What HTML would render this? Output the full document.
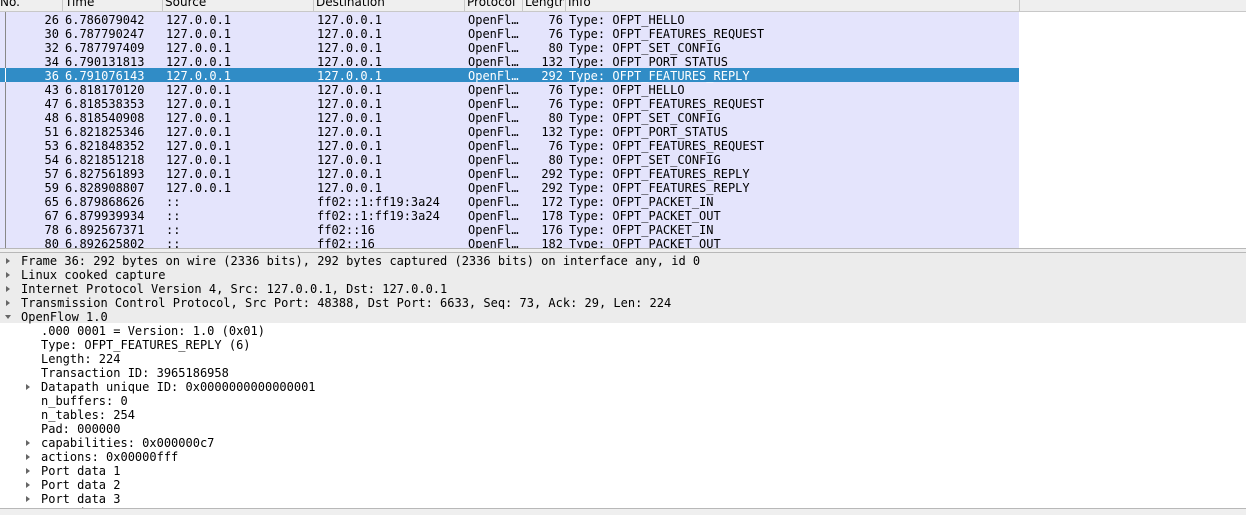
<!DOCTYPE html>
<html><head><style>
*{margin:0;padding:0;box-sizing:border-box}
body{width:1246px;height:515px;overflow:hidden;background:#fff;font-family:"DejaVu Sans Mono","Liberation Mono",monospace;font-size:12px;color:#000;position:relative}
.hdr{position:absolute;left:0;top:0;width:1246px;height:12px;background:#efefef;border-bottom:1px solid #c8c8c8;font-family:"DejaVu Sans","Liberation Sans",sans-serif;font-size:12px;line-height:11px;overflow:hidden}
.hdr span{position:absolute;top:-3px;white-space:nowrap;overflow:hidden}
.hdr i{position:absolute;top:0;width:1px;height:12px;background:#c8c8c8}
.list{position:absolute;left:0;top:12px;width:1019px;height:236px;background:#e4e4fc;overflow:hidden}
.row{position:absolute;left:0;width:1019px;height:14px;line-height:14px;white-space:pre}
.row span{position:absolute;top:1px}
.sel{background:#308cc6;color:#fff}
.vl{position:absolute;left:5px;width:1px;background:#888}
.split{position:absolute;left:0;top:248px;width:1246px;height:5px;background:#efefef;border-top:1px solid #b8b8b8;border-bottom:1px solid #b8b8b8}
.det{position:absolute;left:0;top:253px;width:1246px;height:255px;overflow:hidden}
.d{position:absolute;left:0;width:1246px;height:14px;line-height:14px;white-space:pre}
.g{background:#ececec}
.d span{position:absolute;top:1px}
.tri{position:absolute;top:5px;width:0;height:0;border-top:3px solid transparent;border-bottom:3px solid transparent;border-left:4px solid #666}
.tdn{position:absolute;top:6px;width:0;height:0;border-left:3px solid transparent;border-right:3px solid transparent;border-top:4px solid #666}
.bot{position:absolute;left:0;top:508px;width:1246px;height:7px;background:#efefef;border-top:1px solid #b8b8b8}
</style></head><body>
<div class="hdr">
<span style="left:0">No.</span><i style="left:62px"></i>
<span style="left:65px">Time</span><i style="left:162px"></i>
<span style="left:165px">Source</span><i style="left:313px"></i>
<span style="left:316px">Destination</span><i style="left:464px"></i>
<span style="left:467px">Protocol</span><i style="left:522px"></i>
<span style="left:525px;width:39px">Length</span><i style="left:565px"></i>
<span style="left:568px">Info</span><i style="left:1019px"></i>
</div>
<div class="list">
<div class="vl" style="top:0;height:236px"></div>
<div class="row" style="top:0"><span style="right:960px">26</span><span style="left:65px">6.786079042</span><span style="left:166px">127.0.0.1</span><span style="left:317px">127.0.0.1</span><span style="left:468px">OpenFl…</span><span style="right:456px">76</span><span style="left:569px">Type: OFPT_HELLO</span></div>
<div class="row" style="top:14px"><span style="right:960px">30</span><span style="left:65px">6.787790247</span><span style="left:166px">127.0.0.1</span><span style="left:317px">127.0.0.1</span><span style="left:468px">OpenFl…</span><span style="right:456px">76</span><span style="left:569px">Type: OFPT_FEATURES_REQUEST</span></div>
<div class="row" style="top:28px"><span style="right:960px">32</span><span style="left:65px">6.787797409</span><span style="left:166px">127.0.0.1</span><span style="left:317px">127.0.0.1</span><span style="left:468px">OpenFl…</span><span style="right:456px">80</span><span style="left:569px">Type: OFPT_SET_CONFIG</span></div>
<div class="row" style="top:42px"><span style="right:960px">34</span><span style="left:65px">6.790131813</span><span style="left:166px">127.0.0.1</span><span style="left:317px">127.0.0.1</span><span style="left:468px">OpenFl…</span><span style="right:456px">132</span><span style="left:569px">Type: OFPT_PORT_STATUS</span></div>
<div class="row sel" style="top:56px"><span style="left:5px;top:0;width:1px;height:14px;background:#fff"></span><span style="right:960px">36</span><span style="left:65px">6.791076143</span><span style="left:166px">127.0.0.1</span><span style="left:317px">127.0.0.1</span><span style="left:468px">OpenFl…</span><span style="right:456px">292</span><span style="left:569px">Type: OFPT_FEATURES_REPLY</span></div>
<div class="row" style="top:70px"><span style="right:960px">43</span><span style="left:65px">6.818170120</span><span style="left:166px">127.0.0.1</span><span style="left:317px">127.0.0.1</span><span style="left:468px">OpenFl…</span><span style="right:456px">76</span><span style="left:569px">Type: OFPT_HELLO</span></div>
<div class="row" style="top:84px"><span style="right:960px">47</span><span style="left:65px">6.818538353</span><span style="left:166px">127.0.0.1</span><span style="left:317px">127.0.0.1</span><span style="left:468px">OpenFl…</span><span style="right:456px">76</span><span style="left:569px">Type: OFPT_FEATURES_REQUEST</span></div>
<div class="row" style="top:98px"><span style="right:960px">48</span><span style="left:65px">6.818540908</span><span style="left:166px">127.0.0.1</span><span style="left:317px">127.0.0.1</span><span style="left:468px">OpenFl…</span><span style="right:456px">80</span><span style="left:569px">Type: OFPT_SET_CONFIG</span></div>
<div class="row" style="top:112px"><span style="right:960px">51</span><span style="left:65px">6.821825346</span><span style="left:166px">127.0.0.1</span><span style="left:317px">127.0.0.1</span><span style="left:468px">OpenFl…</span><span style="right:456px">132</span><span style="left:569px">Type: OFPT_PORT_STATUS</span></div>
<div class="row" style="top:126px"><span style="right:960px">53</span><span style="left:65px">6.821848352</span><span style="left:166px">127.0.0.1</span><span style="left:317px">127.0.0.1</span><span style="left:468px">OpenFl…</span><span style="right:456px">76</span><span style="left:569px">Type: OFPT_FEATURES_REQUEST</span></div>
<div class="row" style="top:140px"><span style="right:960px">54</span><span style="left:65px">6.821851218</span><span style="left:166px">127.0.0.1</span><span style="left:317px">127.0.0.1</span><span style="left:468px">OpenFl…</span><span style="right:456px">80</span><span style="left:569px">Type: OFPT_SET_CONFIG</span></div>
<div class="row" style="top:154px"><span style="right:960px">57</span><span style="left:65px">6.827561893</span><span style="left:166px">127.0.0.1</span><span style="left:317px">127.0.0.1</span><span style="left:468px">OpenFl…</span><span style="right:456px">292</span><span style="left:569px">Type: OFPT_FEATURES_REPLY</span></div>
<div class="row" style="top:168px"><span style="right:960px">59</span><span style="left:65px">6.828908807</span><span style="left:166px">127.0.0.1</span><span style="left:317px">127.0.0.1</span><span style="left:468px">OpenFl…</span><span style="right:456px">292</span><span style="left:569px">Type: OFPT_FEATURES_REPLY</span></div>
<div class="row" style="top:182px"><span style="right:960px">65</span><span style="left:65px">6.879868626</span><span style="left:166px">::</span><span style="left:317px">ff02::1:ff19:3a24</span><span style="left:468px">OpenFl…</span><span style="right:456px">172</span><span style="left:569px">Type: OFPT_PACKET_IN</span></div>
<div class="row" style="top:196px"><span style="right:960px">67</span><span style="left:65px">6.879939934</span><span style="left:166px">::</span><span style="left:317px">ff02::1:ff19:3a24</span><span style="left:468px">OpenFl…</span><span style="right:456px">178</span><span style="left:569px">Type: OFPT_PACKET_OUT</span></div>
<div class="row" style="top:210px"><span style="right:960px">78</span><span style="left:65px">6.892567371</span><span style="left:166px">::</span><span style="left:317px">ff02::16</span><span style="left:468px">OpenFl…</span><span style="right:456px">176</span><span style="left:569px">Type: OFPT_PACKET_IN</span></div>
<div class="row" style="top:224px"><span style="right:960px">80</span><span style="left:65px">6.892625802</span><span style="left:166px">::</span><span style="left:317px">ff02::16</span><span style="left:468px">OpenFl…</span><span style="right:456px">182</span><span style="left:569px">Type: OFPT_PACKET_OUT</span></div>
</div>
<div class="split"></div>
<div class="det">
<div class="d g" style="top:0"><b class="tri" style="left:6px"></b><span style="left:21px">Frame 36: 292 bytes on wire (2336 bits), 292 bytes captured (2336 bits) on interface any, id 0</span></div>
<div class="d g" style="top:14px"><b class="tri" style="left:6px"></b><span style="left:21px">Linux cooked capture</span></div>
<div class="d g" style="top:28px"><b class="tri" style="left:6px"></b><span style="left:21px">Internet Protocol Version 4, Src: 127.0.0.1, Dst: 127.0.0.1</span></div>
<div class="d g" style="top:42px"><b class="tri" style="left:6px"></b><span style="left:21px">Transmission Control Protocol, Src Port: 48388, Dst Port: 6633, Seq: 73, Ack: 29, Len: 224</span></div>
<div class="d g" style="top:56px"><b class="tdn" style="left:5px"></b><span style="left:21px">OpenFlow 1.0</span></div>
<div class="d" style="top:70px"><span style="left:41px">.000 0001 = Version: 1.0 (0x01)</span></div>
<div class="d" style="top:84px"><span style="left:41px">Type: OFPT_FEATURES_REPLY (6)</span></div>
<div class="d" style="top:98px"><span style="left:41px">Length: 224</span></div>
<div class="d" style="top:112px"><span style="left:41px">Transaction ID: 3965186958</span></div>
<div class="d" style="top:126px"><b class="tri" style="left:26px"></b><span style="left:41px">Datapath unique ID: 0x0000000000000001</span></div>
<div class="d" style="top:140px"><span style="left:41px">n_buffers: 0</span></div>
<div class="d" style="top:154px"><span style="left:41px">n_tables: 254</span></div>
<div class="d" style="top:168px"><span style="left:41px">Pad: 000000</span></div>
<div class="d" style="top:182px"><b class="tri" style="left:26px"></b><span style="left:41px">capabilities: 0x000000c7</span></div>
<div class="d" style="top:196px"><b class="tri" style="left:26px"></b><span style="left:41px">actions: 0x00000fff</span></div>
<div class="d" style="top:210px"><b class="tri" style="left:26px"></b><span style="left:41px">Port data 1</span></div>
<div class="d" style="top:224px"><b class="tri" style="left:26px"></b><span style="left:41px">Port data 2</span></div>
<div class="d" style="top:238px"><b class="tri" style="left:26px"></b><span style="left:41px">Port data 3</span></div>
<div class="d" style="top:252px"><b class="tri" style="left:26px"></b><span style="left:41px">Port data 4</span></div>
</div>
<div class="bot"></div>
</body></html>
